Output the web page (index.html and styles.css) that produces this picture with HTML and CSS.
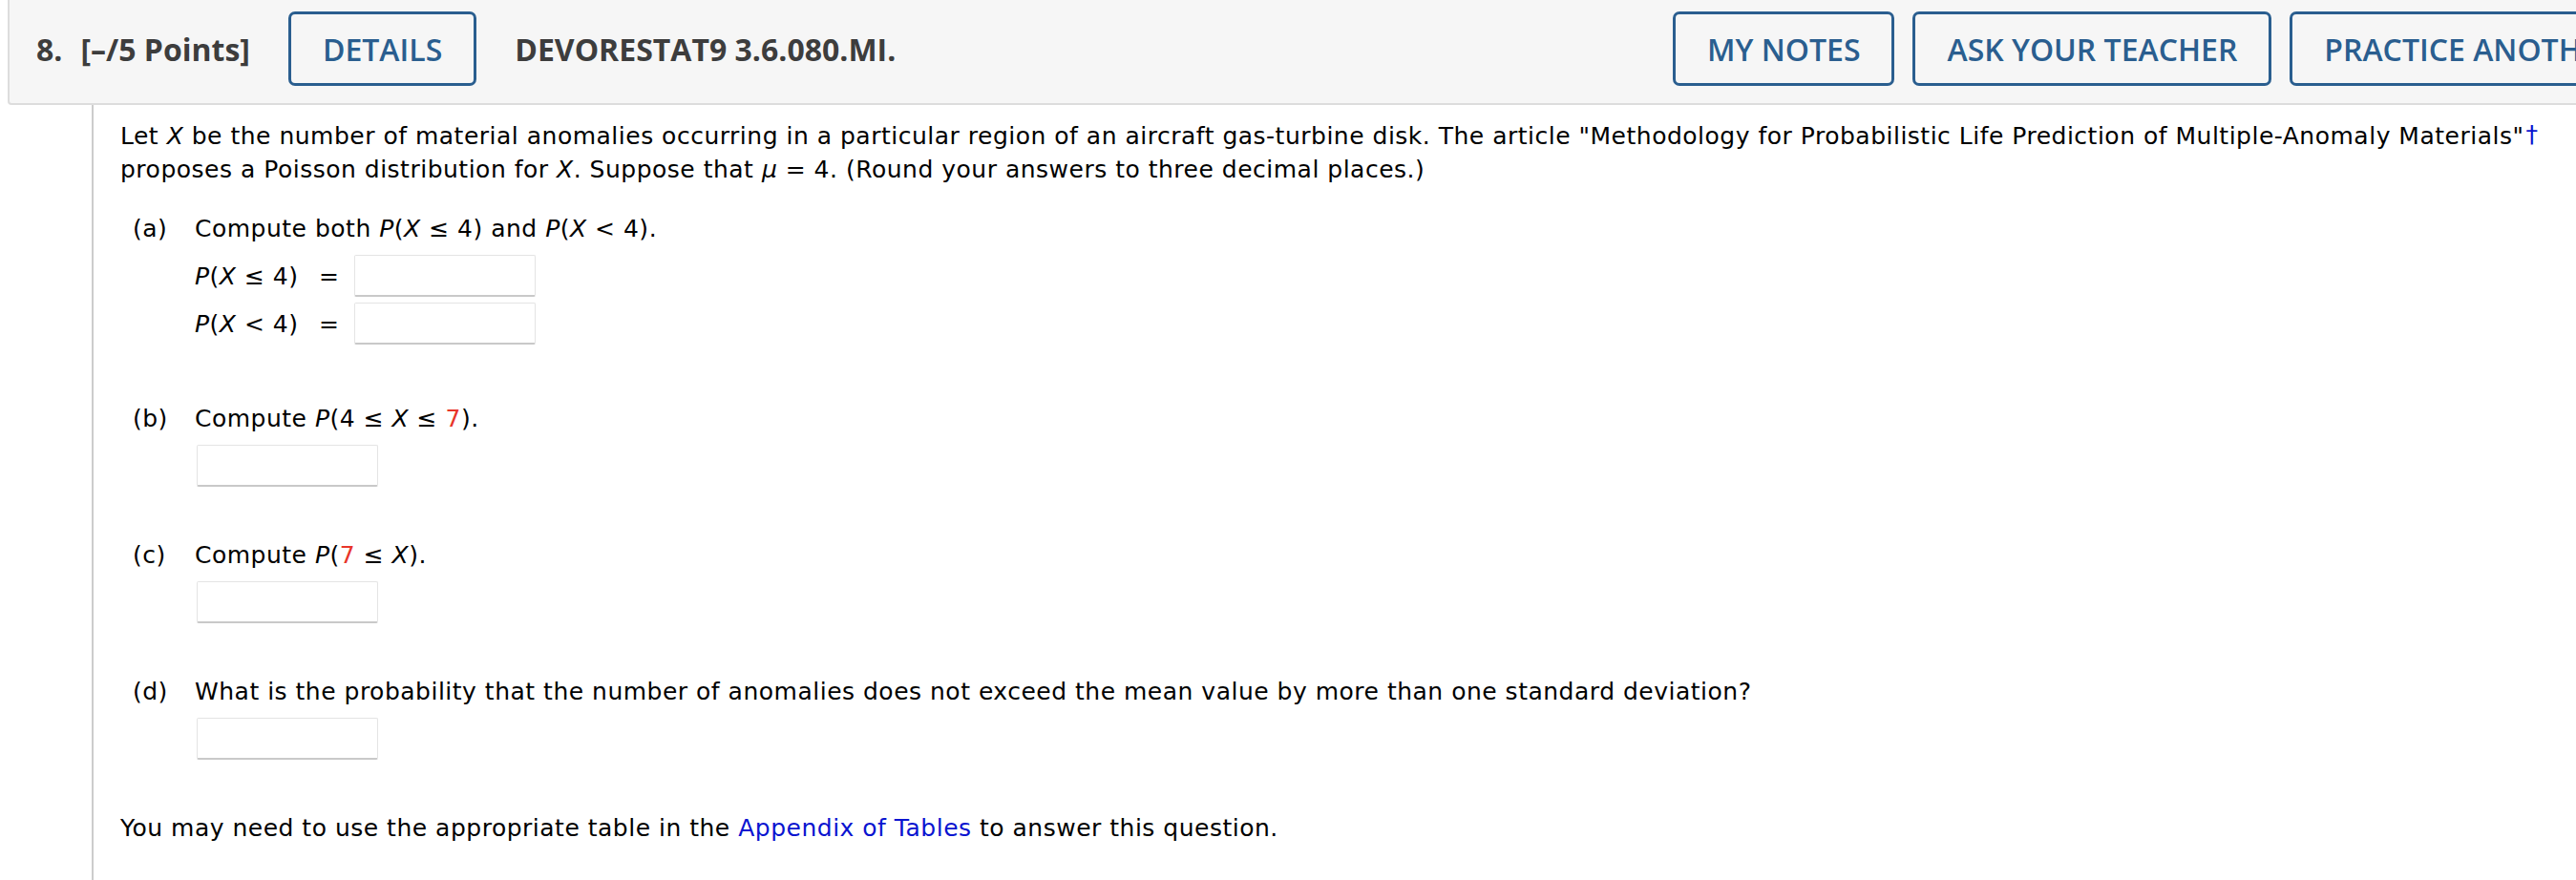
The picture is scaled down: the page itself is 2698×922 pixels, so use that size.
FILE: index.html
```html
<!DOCTYPE html>
<html lang="en">
<head>
<meta charset="utf-8">
<title>Question 8</title>
<link rel="stylesheet" href="styles.css">
</head>
<body>
<div class="page">
  <div class="qheader">
    <span class="qnum">8.</span>
    <span class="qpoints">[–/5 Points]</span>
    <button class="btn">DETAILS</button>
    <span class="qtitle">DEVORESTAT9 3.6.080.MI.</span>
    <div class="actions">
      <button class="btn">MY NOTES</button>
      <button class="btn">ASK YOUR TEACHER</button>
      <button class="btn">PRACTICE ANOTHER</button>
    </div>
  </div>
  <div class="qbody">
    <p class="intro"><span class="line">Let <i>X</i> be the number of material anomalies occurring in a particular region of an aircraft gas-turbine disk. The article "Methodology for Probabilistic Life Prediction of Multiple-Anomaly Materials"<span class="dagger">†</span></span><span class="line">proposes a Poisson distribution for <i>X</i>. Suppose that <i>μ</i> = 4. (Round your answers to three decimal places.)</span></p>

    <div class="part part-a">
      <span class="plabel">(a)</span>
      <div class="pcontent">
        <div class="ptext">Compute both <i>P</i>(<i>X</i> ≤ 4) and <i>P</i>(<i>X</i> &lt; 4).</div>
        <div class="eqrows">
          <div class="eqrow"><span class="eqlabel"><i>P</i>(<i>X</i> ≤ 4)</span><span class="eqsign">=</span><span class="answer"></span></div>
          <div class="eqrow"><span class="eqlabel"><i>P</i>(<i>X</i> &lt; 4)</span><span class="eqsign">=</span><span class="answer"></span></div>
        </div>
      </div>
    </div>

    <div class="part">
      <span class="plabel">(b)</span>
      <div class="pcontent">
        <div class="ptext">Compute <i>P</i>(4 ≤ <i>X</i> ≤ <span class="red">7</span>).</div>
        <span class="answer block"></span>
      </div>
    </div>

    <div class="part">
      <span class="plabel">(c)</span>
      <div class="pcontent">
        <div class="ptext">Compute <i>P</i>(<span class="red">7</span> ≤ <i>X</i>).</div>
        <span class="answer block"></span>
      </div>
    </div>

    <div class="part">
      <span class="plabel">(d)</span>
      <div class="pcontent">
        <div class="ptext">What is the probability that the number of anomalies does not exceed the mean value by more than one standard deviation?</div>
        <span class="answer block"></span>
      </div>
    </div>

    <p class="footnote">You may need to use the appropriate table in the <a class="link" href="#">Appendix of Tables</a> to answer this question.</p>
  </div>
</div>
</body>
</html>
```
FILE: styles.css
```css
html, body {
  margin: 0;
  padding: 0;
  background: #ffffff;
  overflow: hidden;
}

.page {
  padding-left: 8px;
  width: 2800px;
}

.qheader {
  box-sizing: border-box;
  width: 2800px;
  height: 110px;
  display: flex;
  align-items: center;
  padding: 0 28px 6px 28px;
  background: #f6f6f6;
  border: 2px solid #dddddd;
  border-top: none;
  border-radius: 0 0 4px 4px;
  font-family: "Open Sans", "Liberation Sans", sans-serif;
  font-size: 32px;
  color: #3d3d3d;
}

.qnum {
  font-weight: 700;
  margin-right: 19px;
}

.qpoints {
  font-weight: 700;
  margin-right: 40px;
}

.qtitle {
  font-weight: 700;
  margin-left: 40px;
}

.actions {
  margin-left: auto;
  display: flex;
  gap: 19px;
}

.btn {
  box-sizing: border-box;
  height: 78px;
  padding: 0 33px;
  background: transparent;
  border: 3px solid #2a5e8f;
  border-radius: 7px;
  color: #2a5e8f;
  font-family: "Open Sans", "Liberation Sans", sans-serif;
  font-size: 32px;
  font-weight: 600;
  white-space: nowrap;
}

.qbody {
  margin-left: 88px;
  border-left: 2px solid #cccccc;
  padding: 15px 0 60px 28px;
  font-family: "DejaVu Sans", Verdana, sans-serif;
  font-size: 25px;
  letter-spacing: 0.5px;
  line-height: 35px;
  color: #000000;
}

.intro {
  margin: 0;
}

.intro .line {
  display: block;
  white-space: nowrap;
}

.dagger {
  color: #0a14d0;
  position: relative;
  top: -2px;
  margin-left: 2px;
}

.part {
  display: grid;
  grid-template-columns: 65px 1fr;
  margin-left: 13px;
  margin-top: 54px;
}

.part-a {
  margin-top: 27px;
}

.ptext {
  white-space: nowrap;
}

.eqrows {
  margin-top: 10px;
  padding-bottom: 6px;
}

.eqrow {
  display: flex;
  align-items: center;
  height: 44px;
  margin-top: 6px;
}

.eqrow:first-child {
  margin-top: 0;
}

.eqlabel {
  width: 130px;
}

.eqsign {
  width: 37px;
}

.answer {
  display: inline-block;
  box-sizing: border-box;
  width: 190px;
  height: 44px;
  background: #ffffff;
  border: 1px solid #e4e4e4;
  border-bottom: 2px solid #c9c9c9;
  border-radius: 2px;
}

.answer.block {
  display: block;
  margin: 10px 0 0 2px;
}

.red {
  color: #e8352a;
}

.footnote {
  margin: 54px 0 0 0;
}

.link {
  color: #0a14d0;
  text-decoration: none;
}
```
